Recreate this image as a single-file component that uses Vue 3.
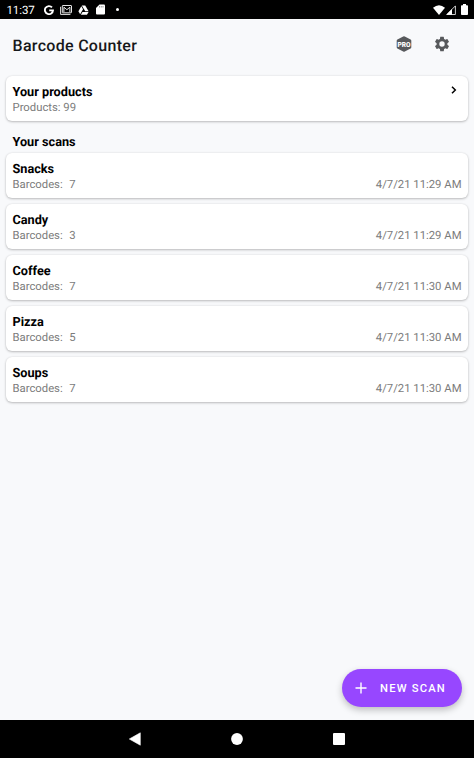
<script setup>
const scans = [
  { name: 'Snacks', count: 7, date: '4/7/21 11:29 AM' },
  { name: 'Candy', count: 3, date: '4/7/21 11:29 AM' },
  { name: 'Coffee', count: 7, date: '4/7/21 11:30 AM' },
  { name: 'Pizza', count: 5, date: '4/7/21 11:30 AM' },
  { name: 'Soups', count: 7, date: '4/7/21 11:30 AM' },
]
</script>

<template>
  <div class="screen">
    <div class="status">
      <span class="time">11:37</span>
      <svg class="g" width="10" height="10" viewBox="0 0 24 24">
        <path d="M19.2 5.8A9.7 9.7 0 1 0 21.6 12.8H12.5" fill="none" stroke="#fff" stroke-width="4.4" />
      </svg>
      <svg class="mail" width="12" height="10" viewBox="0 0 12 10" fill="none" stroke="#fff">
        <path d="M.6 1.8v7.6h9.8" stroke-width=".9" />
        <rect x="2.3" y=".5" width="9.2" height="7.3" rx=".5" stroke-width=".9" />
        <path d="M3.9 7V2.2l3 2.500 3-2.500V7" stroke-width=".9" />
      </svg>
      <svg class="drive" width="11" height="10" viewBox="0 0 24 22" fill="#fff">
        <path d="M8.2 1h7.6l7.4 13h-7.4z" />
        <path d="M7.2 2.6 11 9.2 4.6 20.6.8 14z" />
        <path d="M9.8 15.4h13.4L19.6 21.4H6.2z" />
      </svg>
      <svg class="sd" width="9" height="11" viewBox="0 0 18 22">
        <path d="M7 1h9q2 0 2 2v16q0 2-2 2H2q-2 0-2-2V8z" fill="#fff" />
        <path d="M7 4v3M10.5 4v3M14 4v3" stroke="#555" stroke-width="1.2" />
      </svg>
      <span class="dot"></span>
      <svg class="wifi" width="12" height="10" viewBox="0 0 12 10">
        <path d="M0 2.7Q6-2.3 12 2.7L6 10z" fill="#fff" />
      </svg>
      <svg class="cell" width="10" height="10" viewBox="0 0 10 10">
        <path d="M.8 9.5 9.4.9v8.6z" fill="none" stroke="#fff" stroke-width=".8" />
        <path d="M.3 9.8 6 4.1v5.7z" fill="#fff" />
      </svg>
      <svg class="battery" width="7" height="11" viewBox="0 0 7 11">
        <path d="M2 0h3v1.3h1.2q.8 0 .8.8v8q0 .9-.8.9H.8Q0 11 0 10.1v-8q0-.8.8-.8H2z" fill="#fff" />
      </svg>
    </div>

    <header class="bar">
      <h1>Barcode Counter</h1>
      <svg class="pro" width="16" height="16" viewBox="0 0 16 16">
        <path d="M7.2.4q.8-.5 1.6 0l5.8 3.2q.7.4.7 1.2v6.4q0 .8-.7 1.2l-5.8 3.2q-.8.5-1.6 0l-5.8-3.2q-.7-.4-.7-1.2V4.8q0-.8.7-1.2z" fill="#57595c" />
        <text x="8" y="10.5" text-anchor="middle" textLength="13" lengthAdjust="spacingAndGlyphs">PRO</text>
      </svg>
      <svg class="gear" width="18" height="18" viewBox="0 0 24 24" fill="#57595c">
        <path d="M19.14 12.94c.04-.3.06-.61.06-.94 0-.32-.02-.64-.07-.94l2.03-1.58a.49.49 0 0 0 .12-.61l-1.92-3.32a.49.49 0 0 0-.59-.22l-2.39.96c-.5-.38-1.03-.7-1.62-.94l-.36-2.54a.48.48 0 0 0-.48-.41h-3.84c-.24 0-.43.17-.47.41l-.36 2.54c-.59.24-1.13.57-1.62.94l-2.39-.96a.48.48 0 0 0-.59.22L2.74 8.87c-.12.21-.08.47.12.61l2.03 1.58c-.05.3-.09.63-.09.94s.02.64.07.94l-2.03 1.58a.49.49 0 0 0-.12.61l1.92 3.32c.12.22.37.29.59.22l2.39-.96c.5.38 1.03.7 1.62.94l.36 2.54c.05.24.24.41.48.41h3.84c.24 0 .44-.17.47-.41l.36-2.54c.59-.24 1.13-.56 1.62-.94l2.39.96c.22.08.47 0 .59-.22l1.92-3.32a.48.48 0 0 0-.12-.61zM12 15.6A3.6 3.6 0 1 1 12 8.4a3.6 3.6 0 0 1 0 7.2z" />
      </svg>
    </header>

    <main>
      <section class="card products">
        <div class="title">
          <span>Your products</span>
          <svg width="6" height="8" viewBox="0 0 6 8">
            <path d="M1 .8 4.300 4 1 7.200" fill="none" stroke="#000" stroke-width="1.5" />
          </svg>
        </div>
        <div class="meta"><span>Products: 99</span></div>
      </section>

      <h2>Your scans</h2>

      <div class="list">
        <section v-for="scan in scans" :key="scan.name" class="card">
          <div class="title">{{ scan.name }}</div>
          <div class="meta">
            <span class="label">Barcodes:<span class="count">{{ scan.count }}</span></span>
            <span class="date">{{ scan.date }}</span>
          </div>
        </section>
      </div>
    </main>

    <div class="actions">
      <button class="fab">
        <svg width="12" height="12" viewBox="0 0 12 12">
          <path d="M6 .5v11M.5 6h11" stroke="#fff" stroke-width="1.4" />
        </svg>
        <span>NEW SCAN</span>
      </button>
    </div>

    <nav class="nav">
      <svg width="12" height="14" viewBox="0 0 12 14"><path d="M11.3.8v12.4L.3 7z" fill="#fff" stroke="#fff" stroke-width=".6" stroke-linejoin="round" /></svg>
      <svg width="12" height="12" viewBox="0 0 12 12"><circle cx="6" cy="6" r="5.9" fill="#fff" /></svg>
      <svg width="12" height="12" viewBox="0 0 12 12"><rect width="12" height="12" rx="1" fill="#fff" /></svg>
    </nav>
  </div>
</template>

<style>
body {
  background: #f8f9fb;
}
</style>

<style scoped>
.screen {
  width: 474px;
  height: 758px;
  display: flex;
  flex-direction: column;
  overflow: hidden;
  background: #f8f9fb;
  font-family: Roboto, sans-serif;
  color: #000;
  text-rendering: geometricPrecision;
}
svg {
  display: block;
  flex: none;
}
.status {
  height: 19px;
  flex: none;
  box-sizing: border-box;
  display: flex;
  align-items: center;
  padding: 0 6px 0 6.5px;
  background: #000;
  color: #fff;
}
.time {
  width: 37px;
  font-size: 11.5px;
  letter-spacing: -0.1px;
  line-height: 20px;
  padding-top: 1px;
  white-space: nowrap;
}
.mail { margin-left: 6.5px; }
.drive { margin-left: 5.5px; }
.sd { margin-left: 7px; }
.dot {
  width: 3px;
  height: 3px;
  margin-left: 11px;
  border-radius: 50%;
  background: #fff;
}
.wifi { margin-left: auto; }
.cell { margin-left: 1px; }
.battery { margin-left: 5px; }
.bar {
  height: 57px;
  flex: none;
  box-sizing: border-box;
  display: flex;
  align-items: center;
  padding: 0 23px 6px 12.5px;
}
h1 {
  margin: 3px 0 0;
  font-size: 16px;
  line-height: 20px;
  font-weight: 500;
  letter-spacing: 0.3px;
  color: #17181a;
}
.pro {
  margin-left: auto;
  margin-top: -1px;
}
.pro text {
  font-size: 7px;
  font-weight: 900;
  fill: #fff;
}
.gear {
  margin-left: 21px;
  margin-top: -1px;
}
main {
  flex: 1;
  padding: 0 6px;
}
.card {
  height: 45px;
  box-sizing: border-box;
  padding: 8px 6.5px 0;
  border-radius: 6px;
  background: #fff;
  box-shadow: 0 1px 2.5px rgba(0, 0, 0, 0.24), 0 0 2px rgba(0, 0, 0, 0.08);
}
.title {
  display: flex;
  justify-content: space-between;
  font-size: 12.7px;
  line-height: 17px;
  font-weight: 700;
}
.title svg {
  margin: 2px 5px 0 0;
}
.meta {
  display: flex;
  justify-content: space-between;
  font-size: 11.3px;
  line-height: 15px;
  margin-top: -1px;
  color: #7b7b7b;
}
.count {
  margin-left: 6.5px;
}
h2 {
  margin: 13px 0 1px 6.5px;
  font-size: 12.7px;
  line-height: 18px;
  font-weight: 700;
}
.list {
  display: flex;
  flex-direction: column;
  gap: 6px;
}
.actions {
  display: flex;
  justify-content: flex-end;
  padding: 0 12px 13px 0;
}
.fab {
  width: 120px;
  height: 38px;
  box-sizing: border-box;
  display: flex;
  align-items: center;
  gap: 13px;
  padding: 0 0 0 13px;
  border: 0;
  border-radius: 19px;
  background: #9747ff;
  color: #fff;
  font-family: inherit;
  font-size: 11.2px;
  line-height: 14px;
  font-weight: 500;
  letter-spacing: 1.2px;
  white-space: nowrap;
  box-shadow: 0 3px 7px rgba(0, 0, 0, 0.24);
}
.fab span {
  padding-top: 2px;
}
.nav {
  height: 38px;
  flex: none;
  box-sizing: border-box;
  display: flex;
  align-items: center;
  justify-content: center;
  gap: 90px;
  background: #000;
}
</style>
